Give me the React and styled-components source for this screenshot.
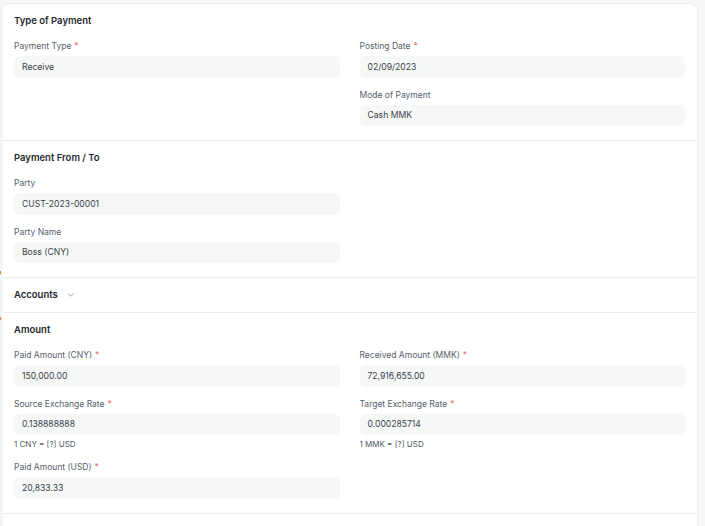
import React from "react";
import styled, { createGlobalStyle } from "styled-components";
import { ChevronDown } from "lucide-react";

const GlobalStyle = createGlobalStyle`
  html, body {
    margin: 0;
    padding: 0;
    background: #f7f7f7;
    font-family: Inter, "Noto Sans", sans-serif;
    -webkit-font-smoothing: antialiased;
  }
`;

const Page = styled.div`
  padding: 3px 7px 0 1px;
  height: 523px;
  overflow: hidden;
  position: relative;
`;

const Card = styled.div`
  background: #fff;
  border: 1px solid #ebeef0;
  border-bottom: none;
  border-radius: 8px 8px 0 0;
  min-height: 560px;
`;

const Section = styled.div`
  padding: ${(p) => (p.$collapsed ? "10px 12px 10px" : "10px 12px 14px")};
  border-bottom: 1px solid #ebeef0;
`;

const SectionTitle = styled.div`
  display: flex;
  align-items: center;
  gap: 8px;
  font-size: 9.5px;
  font-weight: 600;
  line-height: 14px;
  color: #1f272e;
  margin-bottom: ${(p) => (p.$collapsed ? "0" : "12px")};

  svg {
    color: #6b7580;
  }
`;

const Grid = styled.div`
  display: grid;
  grid-template-columns: 1fr 1fr;
  column-gap: 20px;
`;

const Column = styled.div`
  display: flex;
  flex-direction: column;
  gap: 11px;
`;

const Field = styled.div`
  display: flex;
  flex-direction: column;
`;

const Label = styled.div`
  font-size: 8.5px;
  line-height: 13px;
  color: #56606a;
  margin-bottom: 3px;
`;

const Required = styled.span`
  color: #f27474;
  margin-left: 3px;
`;

const Input = styled.div`
  height: 21.5px;
  border-radius: 5px;
  background: #f6f7f7;
  padding: 0 8px;
  display: flex;
  align-items: center;
  font-size: 8.6px;
  color: #3a4148;
`;

const Description = styled.div`
  margin-top: 3px;
  font-size: 8px;
  line-height: 12px;
  color: #525c66;
`;

const EdgeMark = styled.span`
  position: absolute;
  left: 0;
  top: ${(p) => p.$top}px;
  width: 1px;
  height: 3px;
  background: #d98a3a;
`;

const FormField = ({ label, value, required, description }) => (
  <Field>
    <Label>
      {label}
      {required && <Required>*</Required>}
    </Label>
    <Input>{value}</Input>
    {description && <Description>{description}</Description>}
  </Field>
);

const App = () => (
  <>
    <GlobalStyle />
    <Page>
      <EdgeMark $top={271} />
      <EdgeMark $top={317} />
      <Card>
        <Section>
          <SectionTitle>Type of Payment</SectionTitle>
          <Grid>
            <Column>
              <FormField label="Payment Type" value="Receive" required />
            </Column>
            <Column>
              <FormField label="Posting Date" value="02/09/2023" required />
              <FormField label="Mode of Payment" value="Cash MMK" />
            </Column>
          </Grid>
        </Section>

        <Section>
          <SectionTitle>Payment From / To</SectionTitle>
          <Grid>
            <Column>
              <FormField label="Party" value="CUST-2023-00001" />
              <FormField label="Party Name" value="Boss (CNY)" />
            </Column>
            <Column />
          </Grid>
        </Section>

        <Section $collapsed>
          <SectionTitle $collapsed>
            Accounts
            <ChevronDown size={10} strokeWidth={1.6} />
          </SectionTitle>
        </Section>

        <Section>
          <SectionTitle>Amount</SectionTitle>
          <Grid>
            <Column>
              <FormField label="Paid Amount (CNY)" value="150,000.00" required />
              <FormField
                label="Source Exchange Rate"
                value="0.138888888"
                required
                description="1 CNY = [?] USD"
              />
              <FormField label="Paid Amount (USD)" value="20,833.33" required />
            </Column>
            <Column>
              <FormField label="Received Amount (MMK)" value="72,916,655.00" required />
              <FormField
                label="Target Exchange Rate"
                value="0.000285714"
                required
                description="1 MMK = [?] USD"
              />
            </Column>
          </Grid>
        </Section>
      </Card>
    </Page>
  </>
);

export default App;
